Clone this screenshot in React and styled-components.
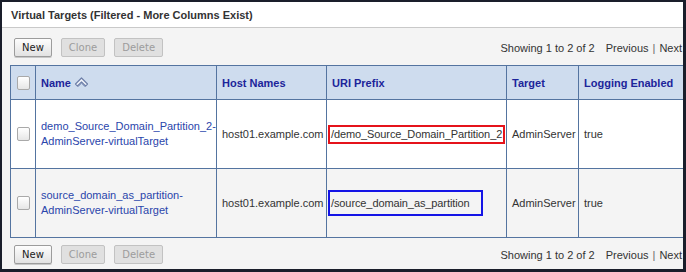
import React from "react";
import styled, { createGlobalStyle } from "styled-components";

const Global = createGlobalStyle`
  html, body { margin: 0; padding: 0; background: #1a1e2b; }
  #root { width: 686px; height: 272px; }
`;

const Frame = styled.div`
  width: 686px;
  height: 272px;
  box-sizing: border-box;
  padding: 2px 3px 3px 2px;
  background: #1a1e2b;
`;

const Panel = styled.div`
  width: 100%;
  height: 100%;
  background: #f4f4f4;
  overflow: hidden;
  display: flex;
  flex-direction: column;
  font-family: "Liberation Sans", Arial, sans-serif;
  font-size: 11px;
  color: #333;
`;

const TitleBar = styled.div`
  height: 25px;
  line-height: 26px;
  background: #fff;
  border-bottom: 1px solid #c9c9c9;
  padding-left: 9px;
  font-weight: bold;
  font-size: 11px;
  color: #333;
  white-space: nowrap;
`;

const Toolbar = styled.div`
  display: flex;
  align-items: center;
  justify-content: space-between;
  height: 19px;
  margin-top: ${(p) => p.$top}px;
  padding-left: 12px;
`;

const ButtonGroup = styled.div`
  display: flex;
  gap: 9px;
`;

const Button = styled.button`
  height: 19px;
  box-sizing: border-box;
  padding: 0 7px;
  font-family: "DejaVu Sans", sans-serif;
  font-size: 10px;
  line-height: 17px;
  border-radius: 2px;
  border: 1px solid ${(p) => (p.disabled ? "#c2c2c2" : "#9c9c9c")};
  color: ${(p) => (p.disabled ? "#9c9c9c" : "#222")};
  background: ${(p) =>
    p.disabled ? "#e0e0e0" : "linear-gradient(#fdfdfd, #e2e2e2)"};
  box-shadow: ${(p) => (p.disabled ? "none" : "0 1px 0 #c8c8c8")};
  cursor: default;
`;

const Pager = styled.div`
  white-space: nowrap;
  font-size: 11px;
  color: #333;
  display: flex;
  align-items: center;
  padding-right: 1px;
`;

const PagerGap = styled.span`
  display: inline-block;
  width: 11px;
`;

const Sep = styled.span`
  color: #666;
  margin: 0 4px;
`;

const TableWrap = styled.div`
  margin-top: 8px;
  margin-left: 8px;
`;

const Table = styled.table`
  border-collapse: collapse;
  table-layout: fixed;
  width: 673px;
`;

const Th = styled.th`
  background: #cedcee;
  border: 1px solid #5474a0;
  height: 33px;
  padding: 0 5px;
  text-align: left;
  font-weight: bold;
  font-size: 11px;
  color: #1c249a;
  white-space: nowrap;
  vertical-align: middle;
`;

const Tr = styled.tr`
  background: ${(p) => (p.$alt ? "#f4f4f4" : "#ffffff")};
`;

const Td = styled.td`
  border: 1px solid #5474a0;
  height: 68px;
  padding: 0 ${(p) => (p.$flush ? 0 : 5)}px;
  font-size: 11px;
  color: #333;
  vertical-align: middle;
  white-space: nowrap;
  overflow: hidden;
`;

const CheckCell = styled.div`
  display: flex;
  justify-content: center;
  padding-left: 1px;
`;

const CheckBox = styled.span`
  display: block;
  width: 11px;
  height: 12px;
  border: 1px solid #a9a9a9;
  border-radius: 2px;
  background: linear-gradient(#ffffff, #e6e6e6);
`;

const NameLink = styled.a`
  color: #2a45ab;
  text-decoration: none;
  line-height: 15px;
  display: block;
`;

const HeadLabel = styled.span`
  display: inline-flex;
  align-items: center;
  gap: 3px;
`;

const Marked = styled.span`
  display: inline-block;
  box-sizing: border-box;
  margin-left: 1px;
  border: 2px solid ${(p) => p.$color};
  height: ${(p) => p.$h}px;
  line-height: ${(p) => p.$h - 4}px;
  padding: 0 ${(p) => p.$pr}px 0 1px;
  letter-spacing: -0.1px;
  vertical-align: middle;
`;

const SortIcon = () => (
  <svg width="15" height="11" viewBox="0 0 15 11">
    <path
      d="M1.5 7 L7.5 1 L13.5 7 L11.5 9 L7.5 5 L3.5 9 Z"
      fill="#f2f5fa"
      stroke="#6d7fa8"
      strokeWidth="1.2"
      strokeLinejoin="round"
    />
    <path d="M4 9.8 L7.5 6.3 L11 9.8" fill="none" stroke="#8a9bc0" strokeWidth="1" />
  </svg>
);

const rows = [
  {
    name: ["demo_Source_Domain_Partition_2-", "AdminServer-virtualTarget"],
    host: "host01.example.com",
    uri: "/demo_Source_Domain_Partition_2",
    color: "#e5131b",
    h: 19,
    pr: 1,
    target: "AdminServer",
    logging: "true",
  },
  {
    name: ["source_domain_as_partition-", "AdminServer-virtualTarget"],
    host: "host01.example.com",
    uri: "/source_domain_as_partition",
    color: "#1414e6",
    h: 26,
    pr: 11,
    target: "AdminServer",
    logging: "true",
  },
];

const Bar = ({ top }) => (
  <Toolbar $top={top}>
    <ButtonGroup>
      <Button>New</Button>
      <Button disabled>Clone</Button>
      <Button disabled>Delete</Button>
    </ButtonGroup>
    <Pager>
      Showing 1 to 2 of 2<PagerGap />Previous<Sep>|</Sep>Next
    </Pager>
  </Toolbar>
);

export default function App() {
  return (
    <>
      <Global />
      <Frame>
        <Panel>
          <TitleBar>Virtual Targets (Filtered - More Columns Exist)</TitleBar>
          <Bar top={10} />
          <TableWrap>
            <Table>
              <colgroup>
                <col style={{ width: 25 }} />
                <col style={{ width: 181 }} />
                <col style={{ width: 110 }} />
                <col style={{ width: 180 }} />
                <col style={{ width: 72 }} />
                <col style={{ width: 105 }} />
              </colgroup>
              <thead>
                <tr>
                  <Th>
                    <CheckCell>
                      <CheckBox />
                    </CheckCell>
                  </Th>
                  <Th>
                    <HeadLabel>
                      Name <SortIcon />
                    </HeadLabel>
                  </Th>
                  <Th>Host Names</Th>
                  <Th>URI Prefix</Th>
                  <Th>Target</Th>
                  <Th>Logging Enabled</Th>
                </tr>
              </thead>
              <tbody>
                {rows.map((r, i) => (
                  <Tr key={i} $alt={i === 1}>
                    <Td $flush>
                      <CheckCell>
                        <CheckBox />
                      </CheckCell>
                    </Td>
                    <Td>
                      {r.name.map((n) => (
                        <NameLink key={n} href="#">
                          {n}
                        </NameLink>
                      ))}
                    </Td>
                    <Td>{r.host}</Td>
                    <Td $flush>
                      <Marked $color={r.color} $h={r.h} $pr={r.pr}>
                        {r.uri}
                      </Marked>
                    </Td>
                    <Td>{r.target}</Td>
                    <Td>{r.logging}</Td>
                  </Tr>
                ))}
              </tbody>
            </Table>
          </TableWrap>
          <Bar top={7} />
        </Panel>
      </Frame>
    </>
  );
}
